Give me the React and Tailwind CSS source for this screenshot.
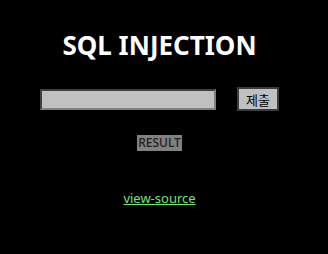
import React from "react";

export default function App() {
  return (
    <div
      className="w-[328px] h-[254px] bg-black overflow-hidden"
      style={{ fontFamily: '"Noto Sans", "Noto Sans CJK KR", sans-serif' }}
    >
      <div className="w-[319px] flex flex-col items-center">
        <h1 className="mt-[28px] text-white font-bold text-[26px] leading-[34px]">
          SQL INJECTION
        </h1>
        <div className="mt-[25px] flex items-center gap-[21px]">
          <input
            type="text"
            className="w-[176px] h-[21px] bg-[#c0c0c0] border-2 border-t-[#404040] border-l-[#404040] border-b-[#808080] border-r-[#808080] outline-none"
          />
          <button className="w-[42px] h-[24px] bg-[#c0c0c0] border-2 border-[#3c3c3c] text-[13px] leading-none text-black" style={{ fontFamily: '"Noto Sans CJK KR", sans-serif' }}>
            제출
          </button>
        </div>
        <div className="mt-[24px] bg-[#808080] text-[#1e1e1e] text-[12px] leading-[16px] px-[1px] font-medium">
          RESULT
        </div>
        <a
          href="#"
          className="mt-[39px] text-[#72e472] underline text-[13px] leading-[16px]"
        >
          view-source
        </a>
      </div>
    </div>
  );
}
